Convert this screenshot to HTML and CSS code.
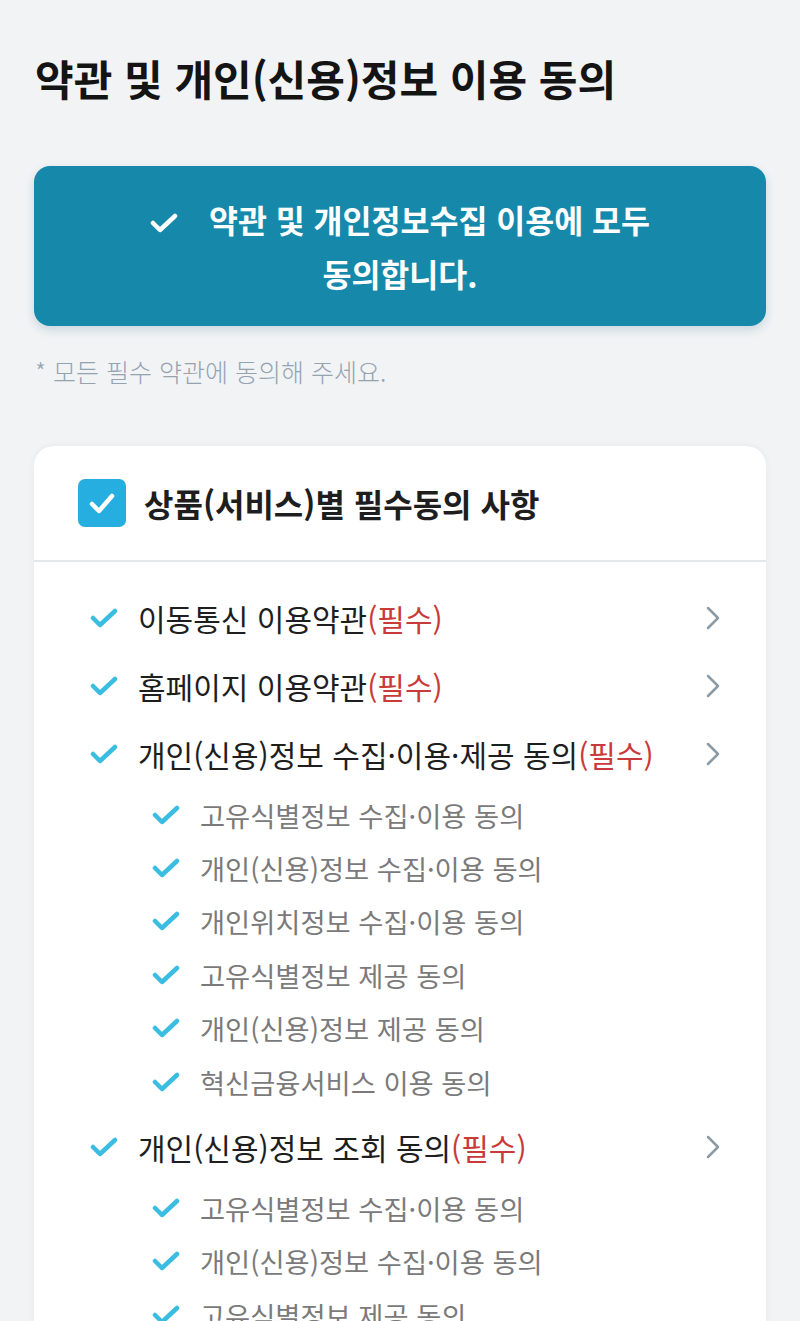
FILE: index.html
```html
<!DOCTYPE html>
<html lang="ko">
<head>
    <meta charset="UTF-8">
    <meta name="viewport" content="width=device-width, initial-scale=1.0">
    <title>약관 및 개인(신용)정보 이용 동의</title>
    <link rel="stylesheet" href="styles.css">
</head>
<body>
    <div class="page">
        <h1>약관 및 개인(신용)정보 이용 동의</h1>

        <button class="agree-all">
            <svg class="agree-check" viewBox="0 0 28 22"><polyline points="3,11 10,18 25,4"/></svg>
            약관 및 개인정보수집 이용에 모두<br>동의합니다.
        </button>

        <p class="notice">* 모든 필수 약관에 동의해 주세요.</p>

        <div class="card">
            <div class="card-head">
                <span class="checkbox">
                    <svg viewBox="0 0 48 48"><polyline points="14,25 21,32 34,17"/></svg>
                </span>
                <h2>상품(서비스)별 필수동의 사항</h2>
            </div>

            <ul class="terms">
                <li>
                    <div class="term">
                        <svg class="tick" viewBox="0 0 28 22"><polyline points="3,11 10,18 25,4"/></svg>
                        <span class="term-name">이동통신 이용약관<em>(필수)</em></span>
                        <svg class="chevron" viewBox="0 0 14 24"><polyline points="2,2 12,12 2,22"/></svg>
                    </div>
                </li>
                <li>
                    <div class="term">
                        <svg class="tick" viewBox="0 0 28 22"><polyline points="3,11 10,18 25,4"/></svg>
                        <span class="term-name">홈페이지 이용약관<em>(필수)</em></span>
                        <svg class="chevron" viewBox="0 0 14 24"><polyline points="2,2 12,12 2,22"/></svg>
                    </div>
                </li>
                <li>
                    <div class="term">
                        <svg class="tick" viewBox="0 0 28 22"><polyline points="3,11 10,18 25,4"/></svg>
                        <span class="term-name">개인(신용)정보 수집·이용·제공 동의<em>(필수)</em></span>
                        <svg class="chevron" viewBox="0 0 14 24"><polyline points="2,2 12,12 2,22"/></svg>
                    </div>
                    <ul class="sub-terms">
                        <li><svg class="tick" viewBox="0 0 28 22"><polyline points="3,11 10,18 25,4"/></svg>고유식별정보 수집·이용 동의</li>
                        <li><svg class="tick" viewBox="0 0 28 22"><polyline points="3,11 10,18 25,4"/></svg>개인(신용)정보 수집·이용 동의</li>
                        <li><svg class="tick" viewBox="0 0 28 22"><polyline points="3,11 10,18 25,4"/></svg>개인위치정보 수집·이용 동의</li>
                        <li><svg class="tick" viewBox="0 0 28 22"><polyline points="3,11 10,18 25,4"/></svg>고유식별정보 제공 동의</li>
                        <li><svg class="tick" viewBox="0 0 28 22"><polyline points="3,11 10,18 25,4"/></svg>개인(신용)정보 제공 동의</li>
                        <li><svg class="tick" viewBox="0 0 28 22"><polyline points="3,11 10,18 25,4"/></svg>혁신금융서비스 이용 동의</li>
                    </ul>
                </li>
                <li>
                    <div class="term">
                        <svg class="tick" viewBox="0 0 28 22"><polyline points="3,11 10,18 25,4"/></svg>
                        <span class="term-name">개인(신용)정보 조회 동의<em>(필수)</em></span>
                        <svg class="chevron" viewBox="0 0 14 24"><polyline points="2,2 12,12 2,22"/></svg>
                    </div>
                    <ul class="sub-terms">
                        <li><svg class="tick" viewBox="0 0 28 22"><polyline points="3,11 10,18 25,4"/></svg>고유식별정보 수집·이용 동의</li>
                        <li><svg class="tick" viewBox="0 0 28 22"><polyline points="3,11 10,18 25,4"/></svg>개인(신용)정보 수집·이용 동의</li>
                        <li><svg class="tick" viewBox="0 0 28 22"><polyline points="3,11 10,18 25,4"/></svg>고유식별정보 제공 동의</li>
                    </ul>
                </li>
            </ul>
        </div>
    </div>
</body>
</html>
```

FILE: styles.css
```css
* {
    margin: 0;
    padding: 0;
    box-sizing: border-box;
}

body {
    font-family: "Noto Sans CJK KR", "Noto Sans", sans-serif;
    background: #f1f3f5;
    color: #1e1e1e;
    overflow: hidden;
}

.page {
    padding: 56px 34px 0;
}

h1 {
    font-size: 42px;
    line-height: 44px;
    font-weight: 700;
    color: #141414;
    padding-left: 1px;
}

.agree-all {
    display: block;
    width: 100%;
    margin-top: 66px;
    padding: 26px 20px;
    background: #1689ab;
    border: none;
    border-radius: 16px;
    color: #ffffff;
    font-family: inherit;
    font-size: 31.5px;
    font-weight: 700;
    line-height: 54px;
    text-align: center;
    box-shadow: 0 4px 10px rgba(20, 90, 120, 0.18);
}

.agree-check {
    width: 28px;
    height: 22px;
    margin-right: 22px;
    vertical-align: -1px;
}

.agree-check polyline {
    fill: none;
    stroke: #ffffff;
    stroke-width: 4.5;
    stroke-linecap: round;
    stroke-linejoin: round;
}

.notice {
    margin-top: 28px;
    padding-left: 1px;
    font-size: 25px;
    line-height: 34px;
    font-weight: 300;
    color: #95a3b1;
}

.card {
    margin-top: 58px;
    background: #ffffff;
    border-radius: 20px;
    box-shadow: 0 0 8px rgba(0, 0, 0, 0.05);
    min-height: 900px;
}

.card-head {
    display: flex;
    align-items: center;
    gap: 18px;
    padding: 33px 44px;
    border-bottom: 2px solid #e5e8eb;
}

.checkbox {
    width: 48px;
    height: 48px;
    border-radius: 7px;
    background: #27aee0;
    flex-shrink: 0;
}

.checkbox svg {
    display: block;
    width: 48px;
    height: 48px;
}

.checkbox polyline {
    fill: none;
    stroke: #ffffff;
    stroke-width: 4.5;
    stroke-linecap: round;
    stroke-linejoin: round;
}

.card-head h2 {
    font-size: 32px;
    font-weight: 700;
    color: #1e1e1e;
}

.terms {
    list-style: none;
    padding: 22px 46px 0 56px;
}

.term {
    display: flex;
    align-items: center;
    height: 68px;
}

.tick {
    width: 28px;
    height: 22px;
    flex-shrink: 0;
}

.tick polyline {
    fill: none;
    stroke: #3bbde2;
    stroke-width: 4.5;
    stroke-linecap: round;
    stroke-linejoin: round;
}

.term-name {
    flex: 1;
    margin-left: 20px;
    font-size: 30px;
    color: #1e1e1e;
}

.term-name em {
    font-style: normal;
    color: #c93a3a;
}

.chevron {
    width: 14px;
    height: 24px;
}

.chevron polyline {
    fill: none;
    stroke: #8c9aa6;
    stroke-width: 2.5;
    stroke-linecap: round;
    stroke-linejoin: round;
}

.sub-terms {
    list-style: none;
    padding-left: 62px;
    margin-bottom: 5px;
}

.sub-terms li {
    display: flex;
    align-items: center;
    gap: 20px;
    height: 53.4px;
    font-size: 27.3px;
    color: #7a7a7a;
}
```
